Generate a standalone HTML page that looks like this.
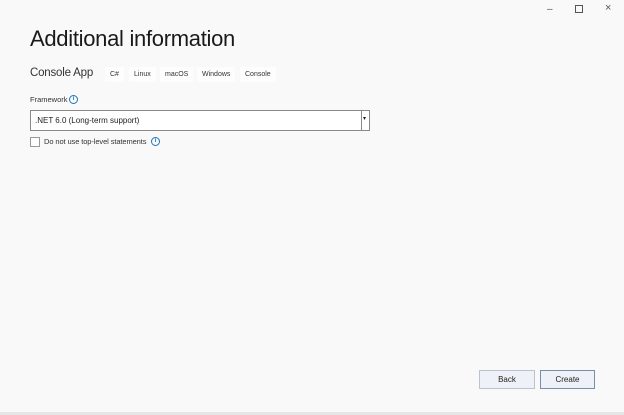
<!DOCTYPE html>
<html><head><style>
body{margin:0;width:624px;height:415px;background:#f9f9fa;font-family:"Liberation Sans",sans-serif;position:relative;overflow:hidden;color:#1e1e1e}
.a{position:absolute;white-space:nowrap}
.tag{position:absolute;top:67px;height:15px;line-height:15px;font-size:7px;background:#fdfdfd;padding:0 5px;color:#333}
.info{position:absolute;width:7px;height:7px;border:1px solid #1b75bb;border-radius:50%;font-size:6px;line-height:7px;text-align:center;color:#1b75bb;font-weight:bold}
.btn{position:absolute;top:370px;height:17px;line-height:17px;text-align:center;font-size:8px;background:#eef1f7;border:1px solid #b9c3cf;color:#222}
</style></head><body>
<div class="a" style="left:547px;top:4px;font-size:10px;color:#555">&#8211;</div>
<div class="a" style="left:575px;top:5px;width:6px;height:6px;border:1px solid #555"></div>
<div class="a" style="left:605px;top:2px;font-size:11px;color:#555">&#215;</div>
<div class="a" style="left:30px;top:26px;font-size:22px;letter-spacing:-0.3px;color:#1a1a1a">Additional information</div>
<div class="a" style="left:30px;top:67px;font-size:11.5px;letter-spacing:-0.2px;color:#333">Console App</div>
<div class="tag" style="left:105px">C#</div>
<div class="tag" style="left:129px">Linux</div>
<div class="tag" style="left:160px">macOS</div>
<div class="tag" style="left:197px">Windows</div>
<div class="tag" style="left:240px">Console</div>
<div class="a" style="left:30px;top:95px;font-size:7.5px;color:#333">Framework</div>
<div class="info" style="left:69px;top:95px">i</div>
<div class="a" style="left:30px;top:110px;width:338px;height:19px;border:1px solid #8a8a8a;background:#fff"></div>
<div class="a" style="left:361px;top:111px;width:1px;height:19px;background:#8a8a8a"></div>
<div class="a" style="left:363px;top:115px;font-size:6px">&#9662;</div>
<div class="a" style="left:35px;top:116px;font-size:8px">.NET 6.0 (Long-term support)</div>
<div class="a" style="left:30px;top:137px;width:8px;height:8px;border:1px solid #999;background:#fff"></div>
<div class="a" style="left:44px;top:137px;font-size:7.5px;letter-spacing:-0.1px;color:#333">Do not use top-level statements</div>
<div class="info" style="left:151px;top:137px">i</div>
<div class="btn" style="left:479px;width:54px">Back</div>
<div class="btn" style="left:540px;width:53px;border-color:#7b8ea8">Create</div>
<div class="a" style="left:0;top:412px;width:624px;height:3px;background:#e6e6e6"></div>
</body></html>
